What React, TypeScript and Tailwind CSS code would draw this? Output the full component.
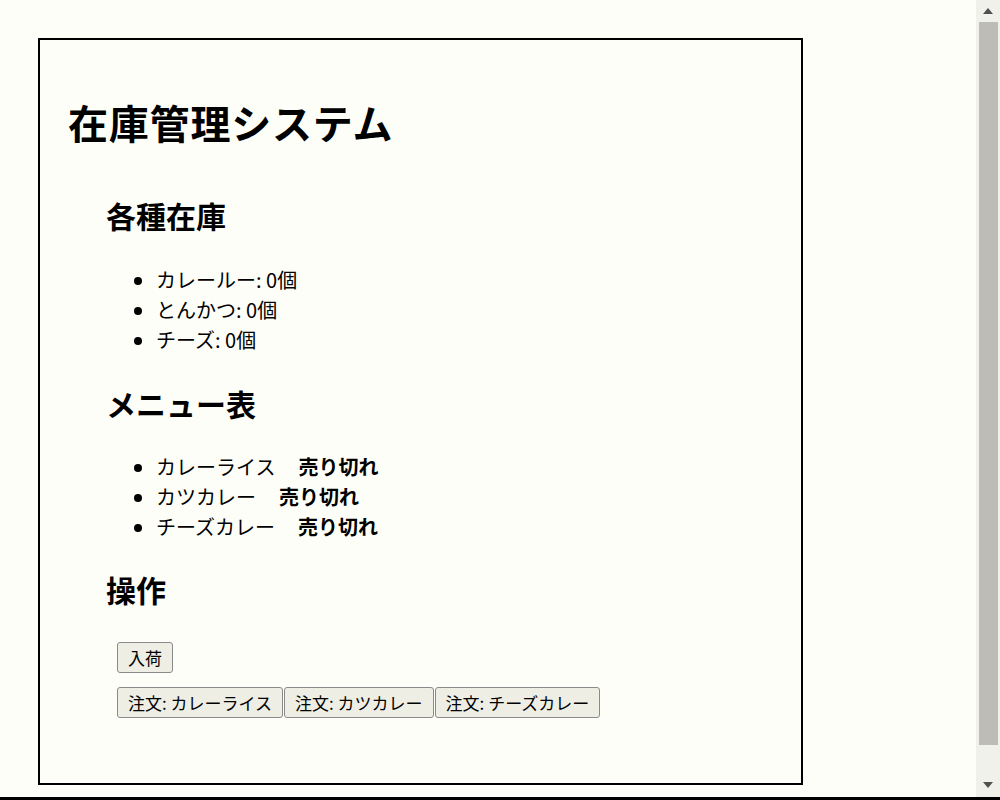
import React from "react";

const font = { fontFamily: '"Noto Sans CJK JP", "Noto Sans", sans-serif' };

function Scrollbar() {
  return (
    <div className="w-[24px] bg-[#f1f1ec] flex flex-col items-center">
      <div className="h-[22px] w-full flex items-center justify-center">
        <svg width="10" height="6" viewBox="0 0 10 6">
          <polygon points="5,0 10,6 0,6" fill="#505050" />
        </svg>
      </div>
      <div className="w-[19px] h-[723px] bg-[#bdbdb6]" />
      <div className="flex-1 w-full flex items-end justify-center pb-[9px]">
        <svg width="10" height="6" viewBox="0 0 10 6">
          <polygon points="0,0 10,0 5,6" fill="#505050" />
        </svg>
      </div>
    </div>
  );
}

const stock = ["カレールー", "とんかつ", "チーズ"];
const menu = ["カレーライス", "カツカレー", "チーズカレー"];

export default function App() {
  return (
    <div className="h-[800px] w-[1000px] flex flex-col bg-[#fefef8] text-black overflow-hidden" style={font}>
      <div className="flex flex-1 min-h-0">
        <div className="flex-1 pt-[38px] pl-[38px]">
          <div className="w-[765px] h-[747px] border-2 border-black pl-[28px]">
            <h1 className="mt-[57px] text-[40px] leading-[50px] font-bold tracking-[0.8px]">在庫管理システム</h1>
            <div className="pl-[38px]">
              <h2 className="mt-[48px] text-[30px] leading-[40px] font-bold">各種在庫</h2>
              <ul className="mt-[30px] list-disc pl-[50px] text-[20px] leading-[30px]">
                {stock.map((s) => (
                  <li key={s}>{s}: 0個</li>
                ))}
              </ul>
              <h2 className="mt-[28px] text-[30px] leading-[40px] font-bold">メニュー表</h2>
              <ul className="mt-[29px] list-disc pl-[50px] text-[20px] leading-[30px]">
                {menu.map((m) => (
                  <li key={m}>
                    {m}
                    <span className="ml-[23px] font-bold">売り切れ</span>
                  </li>
                ))}
              </ul>
              <h2 className="mt-[27px] text-[30px] leading-[40px] font-bold">操作</h2>
              <div className="pl-[11px]">
                <div className="mt-[33px] flex">
                  <button className="h-[31px] px-[10px] text-[17px] leading-none bg-[#eeeee4] border border-[#8a8a8a] rounded-[3px]">入荷</button>
                </div>
                <div className="mt-[14px] flex gap-[1px]">
                  {menu.map((m) => (
                    <button
                      key={m}
                      className="h-[31px] px-[10px] text-[17px] leading-none bg-[#eeeee4] border border-[#8a8a8a] rounded-[3px]"
                    >
                      注文: {m}
                    </button>
                  ))}
                </div>
              </div>
            </div>
          </div>
        </div>
        <Scrollbar />
      </div>
      <div className="h-[3px] bg-black" />
    </div>
  );
}
